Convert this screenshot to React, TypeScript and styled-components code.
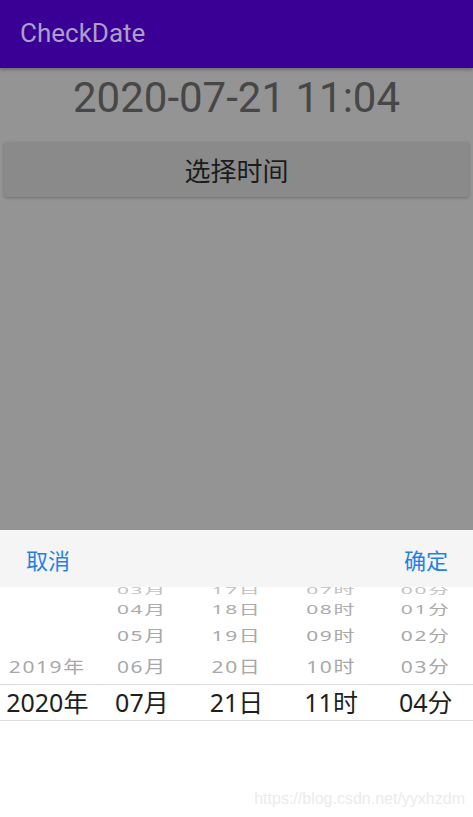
import React from "react";
import styled, { createGlobalStyle } from "styled-components";

const GlobalStyle = createGlobalStyle`
  html, body {
    margin: 0;
    padding: 0;
  }
  body {
    font-family: Roboto, "Noto Sans CJK SC", sans-serif;
  }
`;

const Screen = styled.div`
  width: 473px;
  height: 817px;
  display: flex;
  flex-direction: column;
  overflow: hidden;
  background: #949494;
  position: relative;
`;

const AppBar = styled.div`
  height: 68px;
  flex-shrink: 0;
  background: #3a0095;
  display: flex;
  align-items: center;
  padding-left: 20px;
  box-shadow: 0 2px 3px rgba(0, 0, 0, 0.25);
  z-index: 1;
`;

const Title = styled.div`
  font-family: Roboto, sans-serif;
  font-size: 26px;
  color: #ab9fc6;
  margin-top: -2px;
`;

const Content = styled.div`
  flex: 1;
  display: flex;
  flex-direction: column;
  padding: 0 4px;
`;

const DateText = styled.div`
  font-family: Roboto, sans-serif;
  font-size: 42px;
  color: #474747;
  height: 74px;
  box-sizing: border-box;
  padding-bottom: 16px;
  display: flex;
  align-items: center;
  justify-content: center;
`;

const PickButton = styled.div`
  height: 55px;
  background: #8a8a8a;
  border-radius: 3px;
  box-shadow: 0 1px 3px rgba(0, 0, 0, 0.25);
  display: flex;
  align-items: center;
  justify-content: center;
  font-family: "Noto Sans CJK SC", sans-serif;
  font-size: 26px;
  color: #1c1c1c;
`;

const Sheet = styled.div`
  height: 287px;
  flex-shrink: 0;
  display: flex;
  flex-direction: column;
  background: #ffffff;
  position: relative;
`;

const SheetHeader = styled.div`
  height: 57px;
  flex-shrink: 0;
  background: #f5f5f5;
  display: flex;
  align-items: center;
  justify-content: space-between;
  padding: 0 25px 0 26px;
  z-index: 1;
`;

const HeaderAction = styled.div`
  font-family: "Noto Sans CJK SC", sans-serif;
  font-size: 22px;
  color: #1f83e6;
`;

const Wheel = styled.div`
  position: relative;
  display: grid;
  grid-template-columns: repeat(5, 1fr);
  height: 230px;
  overflow: hidden;
`;

const SelectedBand = styled.div`
  position: absolute;
  left: 0;
  right: 0;
  top: 97px;
  height: 35px;
  border-top: 1px solid #dedede;
  border-bottom: 1px solid #dedede;
  pointer-events: none;
`;

const Column = styled.div`
  display: flex;
  flex-direction: column;
`;

const Cell = styled.div<{ $h: number; $clipTop?: boolean }>`
  height: ${({ $h }) => $h}px;
  display: flex;
  align-items: ${({ $clipTop }) => ($clipTop ? "flex-end" : "center")};
  justify-content: center;
  overflow: hidden;
  flex-shrink: 0;
`;

const CellText = styled.span<{ $selected?: boolean; $scale: number; $color: string; $clipTop?: boolean }>`
  font-family: "Noto Sans", "Noto Sans CJK SC", sans-serif;
  font-size: ${({ $selected }) => ($selected ? "25px" : "21px")};
  letter-spacing: ${({ $selected }) => ($selected ? "0" : "1.6px")};
  color: ${({ $color }) => $color};
  transform: scaleY(${({ $scale }) => $scale});
  margin-bottom: ${({ $clipTop }) => ($clipTop ? "-3px" : "0")};
  white-space: nowrap;
  line-height: 1;
`;

const Watermark = styled.div`
  position: absolute;
  right: 8px;
  bottom: 9px;
  font-family: "Liberation Sans", Arial, sans-serif;
  font-size: 16px;
  color: #ebebeb;
`;

type Row = { h: number; scale: number; color: string; selected?: boolean; clipTop?: boolean };

const rows: Row[] = [
  { h: 11, scale: 0.45, color: "#c2c2c2", clipTop: true },
  { h: 23, scale: 0.6, color: "#acacac" },
  { h: 29, scale: 0.7, color: "#a8a8a8" },
  { h: 34, scale: 0.8, color: "#a8a8a8" },
  { h: 37, scale: 1, color: "#1e1e1e", selected: true },
];

const columns: (string | null)[][] = [
  [null, null, null, "2019年", "2020年"],
  ["03月", "04月", "05月", "06月", "07月"],
  ["17日", "18日", "19日", "20日", "21日"],
  ["07时", "08时", "09时", "10时", "11时"],
  ["00分", "01分", "02分", "03分", "04分"],
];

const App: React.FC = () => {
  return (
    <>
      <GlobalStyle />
      <Screen>
        <AppBar>
          <Title>CheckDate</Title>
        </AppBar>
        <Content>
          <DateText>2020-07-21 11:04</DateText>
          <PickButton>选择时间</PickButton>
        </Content>
        <Sheet>
          <SheetHeader>
            <HeaderAction>取消</HeaderAction>
            <HeaderAction>确定</HeaderAction>
          </SheetHeader>
          <Wheel>
            {columns.map((col, ci) => (
              <Column key={ci}>
                {col.map((label, ri) => {
                  const r = rows[ri];
                  return (
                    <Cell key={ri} $h={r.h} $clipTop={r.clipTop}>
                      {label && (
                        <CellText
                          $selected={r.selected}
                          $scale={r.scale}
                          $color={r.color}
                          $clipTop={r.clipTop}
                        >
                          {label}
                        </CellText>
                      )}
                    </Cell>
                  );
                })}
              </Column>
            ))}
            <SelectedBand />
          </Wheel>
          <Watermark>https://blog.csdn.net/yyxhzdm</Watermark>
        </Sheet>
      </Screen>
    </>
  );
};

export default App;
